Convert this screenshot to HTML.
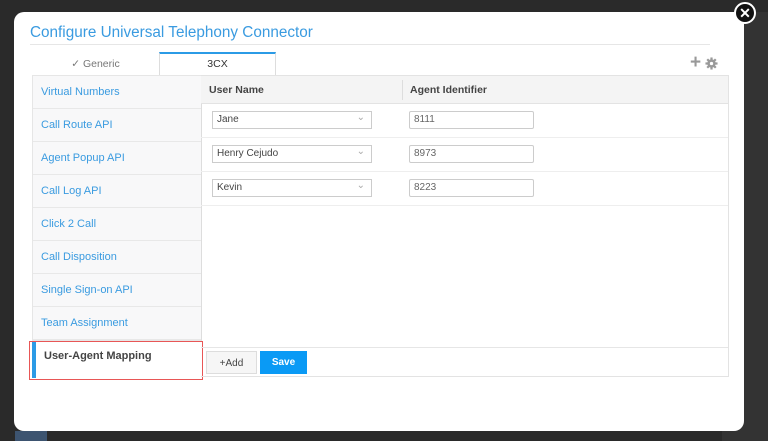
<!DOCTYPE html>
<html><head><style>
*{box-sizing:border-box;margin:0;padding:0}
body{width:768px;height:441px;background:#2a2a2a;position:relative;overflow:hidden;font-family:"Liberation Sans",sans-serif}
.bg-right{position:absolute;left:722px;top:12px;width:46px;height:429px;background:#333}
.bg-bot{position:absolute;left:15px;top:431px;width:32px;height:10px;background:#3d5470}
.modal{position:absolute;left:14px;top:12px;width:730px;height:419px;background:#fff;border-radius:10px}
.title{position:absolute;left:30px;top:24px;font-size:15.3px;color:#3a9be0}
.tline{position:absolute;left:30px;top:44px;width:680px;height:1px;background:#e6e6e6}
.tab{position:absolute;top:52px;height:23px;font-size:10.5px;color:#555;text-align:center;line-height:24px}
.t1{left:32px;width:127px;color:#777}
.t2{left:159px;width:117px;border-top:2px solid #2b9be6;border-left:1px solid #ddd;border-right:1px solid #ddd;background:#fff;line-height:21px;color:#333}
.side{position:absolute;left:32px;top:75px;width:170px;height:266px;background:#f8f8f9;border:1px solid #e6e6e6;border-right:1px solid #ddd}
.item{height:33px;border-bottom:1px solid #e8e8e8;font-size:11px;color:#3a9be0;padding-left:8px;line-height:32px}
.active{position:absolute;left:29px;top:341px;width:174px;height:39px;border:1.5px solid #e85656;background:#fff}
.active .bar{position:absolute;left:2px;top:0;width:4px;height:36px;background:#2b9be6}
.active span{position:absolute;left:14px;top:8px;font-size:11px;font-weight:bold;color:#444}
.content{position:absolute;left:201px;top:75px;width:528px;height:302px;border:1px solid #e3e3e3;border-left:none}
.head{height:28px;background:#f4f4f4;border-bottom:1px solid #e3e3e3;font-size:10.5px;font-weight:bold;color:#444;position:relative}
.head span{position:absolute;top:8px}
.head .sep{position:absolute;left:201px;top:4px;width:1px;height:20px;background:#ddd}
.row{height:34px;border-bottom:1px solid #eee;position:relative}
.sel{position:absolute;left:11px;top:7px;width:160px;height:18px;border:1px solid #ccc;font-size:10px;color:#444;padding-left:4px;line-height:16px}
.sel:after{content:"⌄";position:absolute;right:6px;top:-2px;color:#aaa;font-size:10px}
.inp{position:absolute;left:208px;top:7px;width:125px;height:18px;border:1px solid #ccc;border-radius:2px;font-size:10px;color:#666;padding-left:4px;line-height:16px}
.foot{position:absolute;left:0;top:271px;width:527px;height:1px;background:#e6e6e6}
.btn{position:absolute;top:275px;height:23px;font-size:10px;line-height:23px;text-align:center}
.add{left:5px;width:51px;border:1px solid #ddd;background:#f6f6f6;color:#444}
.save{left:59px;width:47px;background:#0a9af5;color:#fff;font-weight:bold}
.icons{position:absolute;left:690px;top:55px;color:#999;font-size:15px}
.close{position:absolute;left:734px;top:2px;width:22px;height:22px;border-radius:50%;background:#111;border:2px solid #fff;color:#fff;font-weight:bold;text-align:center;font-size:14px;line-height:18px}
</style></head><body>
<div class="bg-right"></div><div class="bg-bot"></div>
<div class="modal"></div>
<div class="title">Configure Universal Telephony Connector</div>
<div class="tline"></div>
<div class="tab t1">✓ Generic</div>
<div class="tab t2">3CX</div>
<div class="icons"><span style="font-size:19px;font-weight:bold;position:relative;top:-3px">+</span>&nbsp;<svg width="13" height="13" viewBox="0 0 14 14" style="position:relative;top:-1px"><circle cx="7" cy="7" r="4.5" fill="#999"/><g stroke="#999" stroke-width="2.4"><line x1="7" y1="0.5" x2="7" y2="13.5"/><line x1="0.5" y1="7" x2="13.5" y2="7"/><line x1="2.4" y1="2.4" x2="11.6" y2="11.6"/><line x1="11.6" y1="2.4" x2="2.4" y2="11.6"/></g><circle cx="7" cy="7" r="1.8" fill="#fff"/></svg></div>
<div class="side">
<div class="item">Virtual Numbers</div><div class="item">Call Route API</div><div class="item">Agent Popup API</div><div class="item">Call Log API</div><div class="item">Click 2 Call</div><div class="item">Call Disposition</div><div class="item">Single Sign-on API</div><div class="item">Team Assignment</div>
</div>
<div class="active"><div class="bar"></div><span>User-Agent Mapping</span></div>
<div class="content">
<div class="head"><span style="left:8px">User Name</span><div class="sep"></div><span style="left:209px">Agent Identifier</span></div>
<div class="row"><div class="sel">Jane</div><div class="inp">8111</div></div>
<div class="row"><div class="sel">Henry Cejudo</div><div class="inp">8973</div></div>
<div class="row"><div class="sel">Kevin</div><div class="inp">8223</div></div>
<div class="foot"></div>
<div class="btn add">+Add</div><div class="btn save">Save</div>
</div>
<div class="close">✕</div>
</body></html>
